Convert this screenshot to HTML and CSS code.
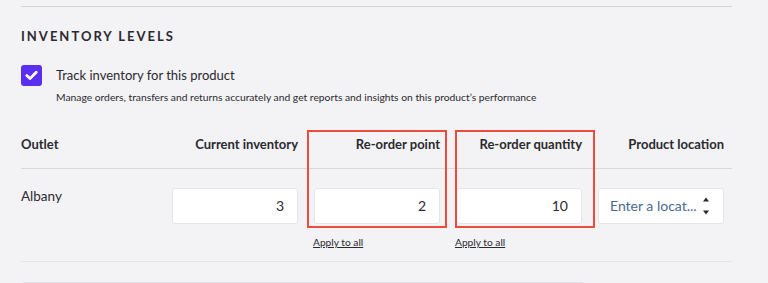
FILE: index.html
```html
<!DOCTYPE html>
<html>
  <head>
    <title>Inventory levels</title>
    <meta charset="utf-8"/>
    <link rel="stylesheet" href="styles.css">
  </head>
  <body>
    <div class="section">
      <div class="rule"></div>
      <h2 class="heading">Inventory levels</h2>
      <div class="track">
        <span class="checkbox">
          <svg width="13" height="11" viewBox="0 0 13 11"><path d="M1.8 5.6 L5 8.6 L11.2 2.2" fill="none" stroke="#fff" stroke-width="2.8" stroke-linecap="round" stroke-linejoin="round"/></svg>
        </span>
        <div>
          <div class="track-label">Track inventory for this product</div>
          <div class="track-help">Manage orders, transfers and returns accurately and get reports and insights on this product’s performance</div>
        </div>
      </div>

      <div class="table">
        <div class="head">
          <div class="cell-left">Outlet</div>
          <div>Current inventory</div>
          <div>Re-order point</div>
          <div>Re-order quantity</div>
          <div>Product location</div>
        </div>
        <div class="row">
          <div class="outlet">Albany</div>
          <div><div class="input">3</div></div>
          <div><div class="input">2</div><a class="apply" href="#">Apply to all</a></div>
          <div><div class="input">10</div><a class="apply" href="#">Apply to all</a></div>
          <div>
            <div class="input select">
              <span>Enter a locat...</span>
              <svg width="8" height="18" viewBox="0 0 8 18"><path d="M4 0.5 L7 4.5 H1 Z M4 17.5 L1 13.5 H7 Z" fill="#2b2a30"/></svg>
            </div>
          </div>
        </div>
        <div class="next"></div>
      </div>

      <div class="mark mark-point"></div>
      <div class="mark mark-qty"></div>
    </div>
  </body>
</html>
```

FILE: styles.css
```css
body {
  background: #f3f2f5;
  color: #2b2a30;
  font-family: Lato, "Open Sans", sans-serif;
  margin: 0;
  overflow: hidden;
}
.section {
  padding: 0 36px 0 21px;
}
.rule {
  border-top: 1px solid #d4d3d9;
  margin-top: 6px;
}
.heading {
  font-size: 13px;
  font-weight: 700;
  letter-spacing: 2px;
  line-height: 20px;
  margin: 19px 0 0;
  text-transform: uppercase;
}
.track {
  display: flex;
  gap: 14px;
  margin-top: 19px;
}
.checkbox {
  align-items: center;
  background: #5a2ff0;
  border-radius: 3px;
  display: flex;
  flex: none;
  height: 21px;
  justify-content: center;
  width: 21px;
}
.track-label {
  font-size: 13px;
  line-height: 20px;
}
.track-help {
  font-size: 10.3px;
  line-height: 16px;
  margin-top: 4px;
}

.table {
  margin-top: 29px;
}
.head, .row {
  display: grid;
  grid-template-columns: 1fr 126px 126px 126px 126px;
  column-gap: 16px;
  padding-right: 8px;
}
.head {
  border-bottom: 1px solid #d9d8de;
  font-size: 13px;
  font-weight: 700;
  line-height: 20px;
  padding-bottom: 14px;
  text-align: right;
}
.head .cell-left {
  text-align: left;
}
.row {
  border-bottom: 1px solid #e4e3e8;
  padding-bottom: 11px;
  padding-top: 19px;
}
.outlet {
  font-size: 13.5px;
  line-height: 20px;
  margin-top: -2px;
}
.input {
  background: #fff;
  border: 1px solid #e6e5ea;
  border-radius: 3px;
  box-sizing: border-box;
  font-size: 14px;
  height: 36px;
  line-height: 34px;
  padding: 0 13px;
  text-align: right;
}
.select {
  align-items: center;
  display: flex;
  justify-content: space-between;
  padding: 0 13px 0 11px;
  text-align: left;
}
.select span {
  color: #4a6a91;
}
.apply {
  color: #2b2a30;
  display: block;
  font-size: 10.2px;
  line-height: 16px;
  margin-top: 10px;
  margin-left: -1px;
}
.next {
  background: #fff;
  border: 1px solid #e2e1e6;
  border-radius: 3px;
  height: 20px;
  margin-top: 20px;
  width: 562px;
}

.mark {
  border: 2px solid #ef4a3c;
  box-sizing: border-box;
  height: 98px;
  position: absolute;
  top: 130px;
  width: 140px;
}
.mark-point {
  left: 307px;
}
.mark-qty {
  left: 455px;
}
```
